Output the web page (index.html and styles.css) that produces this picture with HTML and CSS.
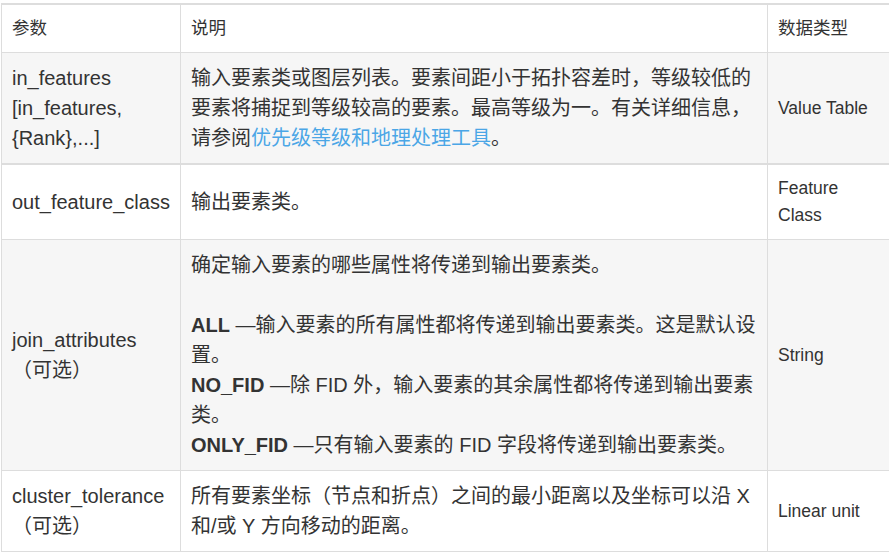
FILE: index.html
```html
<!DOCTYPE html>
<html lang="zh-CN">
<head>
    <meta charset="UTF-8">
    <meta name="viewport" content="width=device-width, initial-scale=1.0">
    <title>参数</title>
    <link rel="stylesheet" href="styles.css">
</head>
<body>

<div class="wrap">
    <table class="params">
        <colgroup>
            <col class="col-name">
            <col class="col-desc">
            <col class="col-type">
        </colgroup>
        <thead>
            <tr>
                <th>参数</th>
                <th>说明</th>
                <th>数据类型</th>
            </tr>
        </thead>
        <tbody>
            <tr class="odd first">
                <td class="name">in_features<br>[in_features,<br>{Rank},...]</td>
                <td class="desc">输入要素类或图层列表。要素间距小于拓扑容差时，等级较低的要素将捕捉到等级较高的要素。最高等级为一。有关详细信息，请参阅<a href="#">优先级等级和地理处理工具</a>。</td>
                <td class="type">Value Table</td>
            </tr>
            <tr>
                <td class="name">out_feature_class</td>
                <td class="desc">输出要素类。</td>
                <td class="type">Feature Class</td>
            </tr>
            <tr class="odd">
                <td class="name">join_attributes<br>（可选）</td>
                <td class="desc">
                    <p class="lead">确定输入要素的哪些属性将传递到输出要素类。</p>
                    <p><b>ALL</b> —输入要素的所有属性都将传递到输出要素类。这是默认设置。</p>
                    <p><b>NO_FID</b> —除 FID 外，输入要素的其余属性都将传递到输出要素类。</p>
                    <p><b>ONLY_FID</b> —只有输入要素的 FID 字段将传递到输出要素类。</p>
                </td>
                <td class="type">String</td>
            </tr>
            <tr>
                <td class="name">cluster_tolerance<br>（可选）</td>
                <td class="desc">所有要素坐标（节点和折点）之间的最小距离以及坐标可以沿 X 和/或 Y 方向移动的距离。</td>
                <td class="type">Linear unit</td>
            </tr>
        </tbody>
    </table>
</div>

</body>
</html>
```

FILE: styles.css
```css
body {
    font-family: "Liberation Sans", "Noto Sans CJK SC", sans-serif;
    color: #333;
    background-color: #fff;
    margin: 0;
    overflow: hidden;
}

.wrap {
    padding: 3px 0 0 1px;
}

.params {
    border-collapse: collapse;
    table-layout: fixed;
    width: 890px;
    border-top: 2px solid #ddd;
    border-left: 1px solid #ddd;
}

.col-name {
    width: 179px;
}

.col-desc {
    width: 587px;
}

.params th,
.params td {
    border: 1px solid #ddd;
    padding: 10px 10px;
    text-align: left;
    vertical-align: middle;
}

.params th {
    font-weight: normal;
    font-size: 17.5px;
    line-height: 27px;
}

.params tr.odd td {
    background-color: #f6f6f6;
}

.params tr.first td {
    border-bottom: 2px solid #ddd;
}

.name {
    font-size: 20px;
    line-height: 30px;
}

.desc {
    font-size: 20px;
    line-height: 30px;
}

.desc p {
    margin: 0;
}

.desc p.lead {
    margin-bottom: 30px;
}

.desc a {
    color: #4ba6e6;
    text-decoration: none;
}

.type {
    font-size: 17.5px;
    line-height: 27px;
}
```
